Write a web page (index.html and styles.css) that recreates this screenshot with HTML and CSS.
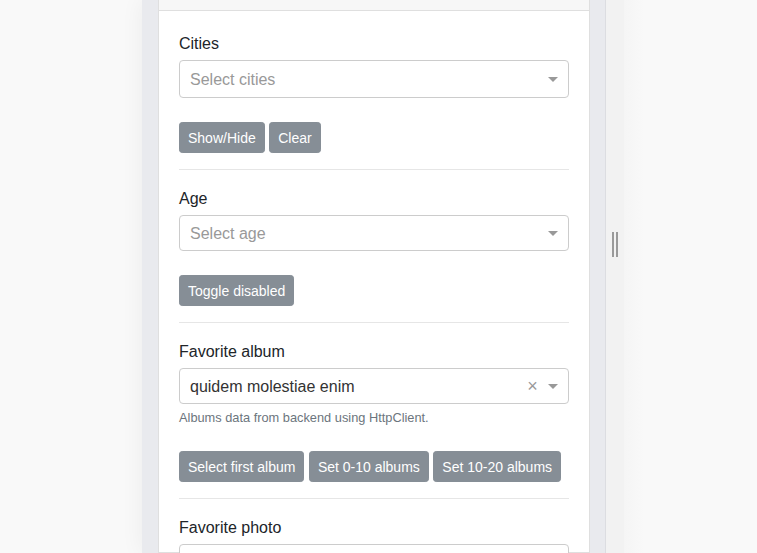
FILE: index.html
```html
<!DOCTYPE html>
<html>
<head>
<meta charset="utf-8">
<link rel="stylesheet" href="styles.css">
</head>
<body>
<div class="layout">
  <div class="side side-left"></div>
  <div class="panel">
    <div class="card">
      <div class="card-header"></div>
      <div class="card-body">
        <div class="form-group">
          <label class="label">Cities</label>
          <div class="select select-multi">
            <div class="select-value placeholder">Select cities</div>
            <div class="arrow-wrap"><span class="arrow"></span></div>
          </div>
        </div>
        <div class="btn-row">
          <button class="btn">Show/Hide</button>
          <button class="btn">Clear</button>
        </div>
        <hr class="divider">

        <div class="form-group">
          <label class="label">Age</label>
          <div class="select">
            <div class="select-value placeholder">Select age</div>
            <div class="arrow-wrap"><span class="arrow"></span></div>
          </div>
        </div>
        <div class="btn-row">
          <button class="btn">Toggle disabled</button>
        </div>
        <hr class="divider">

        <div class="form-group">
          <label class="label">Favorite album</label>
          <div class="select">
            <div class="select-value">quidem molestiae enim</div>
            <div class="clear-wrap">×</div>
            <div class="arrow-wrap"><span class="arrow"></span></div>
          </div>
          <small class="help">Albums data from backend using HttpClient.</small>
        </div>
        <div class="btn-row">
          <button class="btn">Select first album</button>
          <button class="btn">Set 0-10 albums</button>
          <button class="btn">Set 10-20 albums</button>
        </div>
        <hr class="divider">

        <div class="form-group">
          <label class="label">Favorite photo</label>
          <div class="select">
            <div class="select-value placeholder"></div>
            <div class="arrow-wrap"><span class="arrow"></span></div>
          </div>
        </div>
      </div>
    </div>
  </div>
  <div class="gutter"><div class="handle"></div></div>
  <div class="side side-right"></div>
</div>
</body>
</html>
```

FILE: styles.css
```css
html, body {
  margin: 0;
  padding: 0;
  height: 100%;
  overflow: hidden;
}
body {
  background: #f9f9f9;
  font-family: "Liberation Sans", Arial, sans-serif;
  color: #212529;
  font-size: 16px;
  line-height: 1.5;
}
.layout {
  display: flex;
  height: 553px;
  align-items: stretch;
}
.side-left {
  width: 142px;
  flex: none;
}
.side-right {
  flex: 1;
  background: linear-gradient(to right, #f5f5f5, #f9f9f9 20px);
}
.panel {
  width: 464px;
  flex: none;
  box-sizing: border-box;
  background: #e9eaee;
  border-right: 1px solid #dcdde1;
  padding: 0 15px 0 16px;
  box-shadow: 0 0 22px rgba(0, 0, 0, 0.06);
}
.card {
  background: #fff;
  border: 1px solid #dfdfdf;
  border-top: 0;
  height: 100%;
  box-sizing: border-box;
}
.card-header {
  height: 10px;
  background: #f7f7f7;
  border-bottom: 1px solid #dfdfdf;
}
.card-body {
  padding: 20px 20px;
}
.form-group {
  margin-bottom: 24px;
}
.label {
  display: block;
  margin-bottom: 5px;
  padding-top: 1px;
  height: 23px;
  line-height: 24px;
}
.select {
  display: flex;
  align-items: center;
  height: 36px;
  box-sizing: border-box;
  border: 1px solid #ccc;
  border-radius: 4px;
  background: #fff;
}
.select-multi {
  height: 38px;
}
.select-value {
  flex: 1;
  padding-left: 10px;
  padding-top: 2px;
  color: #333;
  white-space: nowrap;
  overflow: hidden;
}
.placeholder {
  color: #999;
}
.clear-wrap {
  width: 17px;
  text-align: center;
  color: #999;
  font-size: 18px;
  line-height: 1;
  margin-right: 2px;
}
.arrow-wrap {
  width: 20px;
  padding-right: 5px;
  display: flex;
  justify-content: center;
  align-items: center;
}
.arrow {
  display: block;
  width: 0;
  height: 0;
  border-style: solid;
  border-color: #999 transparent transparent;
  border-width: 5px 5px 2.5px;
  margin-top: 2px;
}
.help {
  display: block;
  margin-top: 4px;
  font-size: 12.8px;
  line-height: 19.2px;
  color: #6c757d;
}
.btn-row {
  display: flex;
  gap: 4.5px;
}
.btn {
  font-family: inherit;
  font-size: 14px;
  line-height: 21px;
  padding: 5px 8px 3px;
  border: 1px solid #868e96;
  background: #868e96;
  color: #fff;
  border-radius: 3.2px;
  cursor: pointer;
}
.divider {
  border: 0;
  border-top: 1px solid #e6e6e6;
  margin: 16px 0;
  height: 0;
}
.gutter {
  width: 18px;
  flex: none;
  background: #f2f2f2;
  display: flex;
  justify-content: center;
  padding-top: 232px;
  box-sizing: border-box;
}
.handle {
  width: 2px;
  height: 25px;
  border-left: 2px solid #9a9a9a;
  border-right: 2px solid #9a9a9a;
}
```
